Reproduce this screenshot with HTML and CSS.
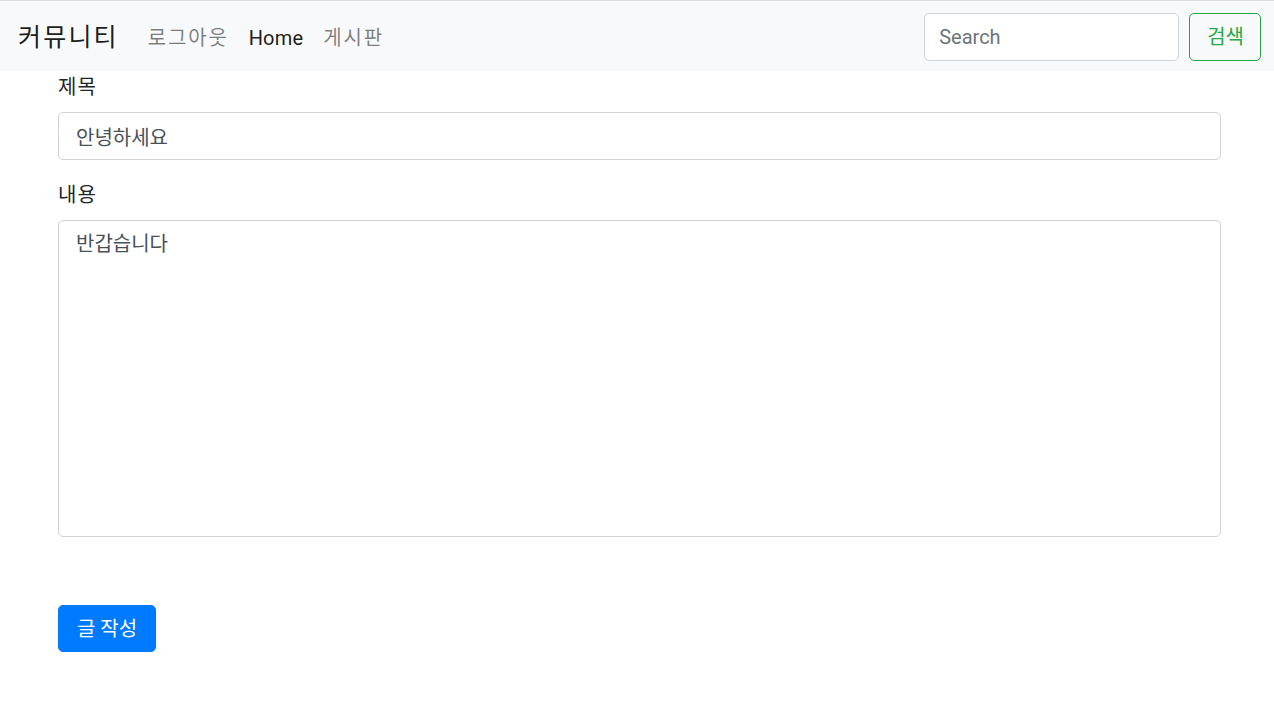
FILE: index.html
```html
<!DOCTYPE html>
<html lang="ko">
<head>
<meta charset="utf-8">
<title>커뮤니티</title>
<link rel="stylesheet" href="styles.css">
</head>
<body>
<nav class="navbar">
  <a class="brand" href="#">커뮤니티</a>
  <ul class="nav">
    <li><a class="nav-link" href="#">로그아웃</a></li>
    <li><a class="nav-link active" href="#">Home</a></li>
    <li><a class="nav-link" href="#">게시판</a></li>
  </ul>
  <form class="search">
    <input class="search-input" type="text" placeholder="Search">
    <button class="btn-outline" type="button">검색</button>
  </form>
</nav>
<main class="container">
  <div class="form-group">
    <label class="label">제목</label>
    <input class="control" type="text" value="안녕하세요">
  </div>
  <div class="form-group">
    <label class="label">내용</label>
    <textarea class="control area">반갑습니다</textarea>
  </div>
  <button class="btn-primary" type="button">글 작성</button>
</main>
</body>
</html>
```
FILE: styles.css
```css
* { box-sizing: border-box; }
html, body { margin: 0; padding: 0; }
body {
  font-family: "Segoe UI", Roboto, "Noto Sans CJK KR", sans-serif;
  font-size: 20px;
  line-height: 1.5;
  letter-spacing: 1.2px;
  color: #212529;
  background: #fff;
  border-top: 1px solid #dcdcdc;
}
.navbar {
  display: flex;
  align-items: center;
  height: 70px;
  background: #f8f9fa;
  padding: 2px 13px 0 18px;
}
.brand {
  font-size: 25px;
  letter-spacing: 2.2px;
  color: rgba(0,0,0,.9);
  text-decoration: none;
  margin-right: 19px;
  line-height: 1.5;
  padding-top: 2px;
}
.nav {
  display: flex;
  list-style: none;
  margin: 0;
  padding: 2px 0 0;
  flex: 1;
}
.nav-link {
  display: block;
  padding: 0 10px;
  letter-spacing: 1.8px;
  color: rgba(0,0,0,.5);
  text-decoration: none;
}
.nav-link.active { color: rgba(0,0,0,.9); letter-spacing: 0.2px; }
.search {
  display: flex;
  align-items: center;
  gap: 10px;
  margin: 0;
}
.search-input {
  width: 255px;
  height: 48px;
  padding: 0 15px 0 14px;
  font: inherit;
  letter-spacing: 0;
  color: #495057;
  border: 1px solid #ced4da;
  border-radius: 5px;
  background: #fff;
}
.search-input::placeholder { color: #6c757d; }
.btn-outline {
  height: 48px;
  padding: 0 16px 0 17px;
  font: inherit;
  color: #28a745;
  background: transparent;
  border: 1px solid #28a745;
  border-radius: 5px;
}
.container {
  padding: 1px 53px 0 58px;
}
.form-group { margin-bottom: 20px; }
.label {
  display: block;
  margin-bottom: 10px;
}
.control {
  display: block;
  width: 100%;
  height: 48px;
  padding: 7px 17px;
  font: inherit;
  color: #495057;
  border: 1px solid #ced4da;
  border-radius: 5px;
  background: #fff;
}
.area {
  height: 317px;
  resize: none;
  padding-top: 8px;
}
.btn-primary {
  margin-top: 48px;
  height: 47px;
  padding: 0 18px;
  font: inherit;
  color: #fff;
  background: #007bff;
  border: 1px solid #007bff;
  border-radius: 5px;
}
```
